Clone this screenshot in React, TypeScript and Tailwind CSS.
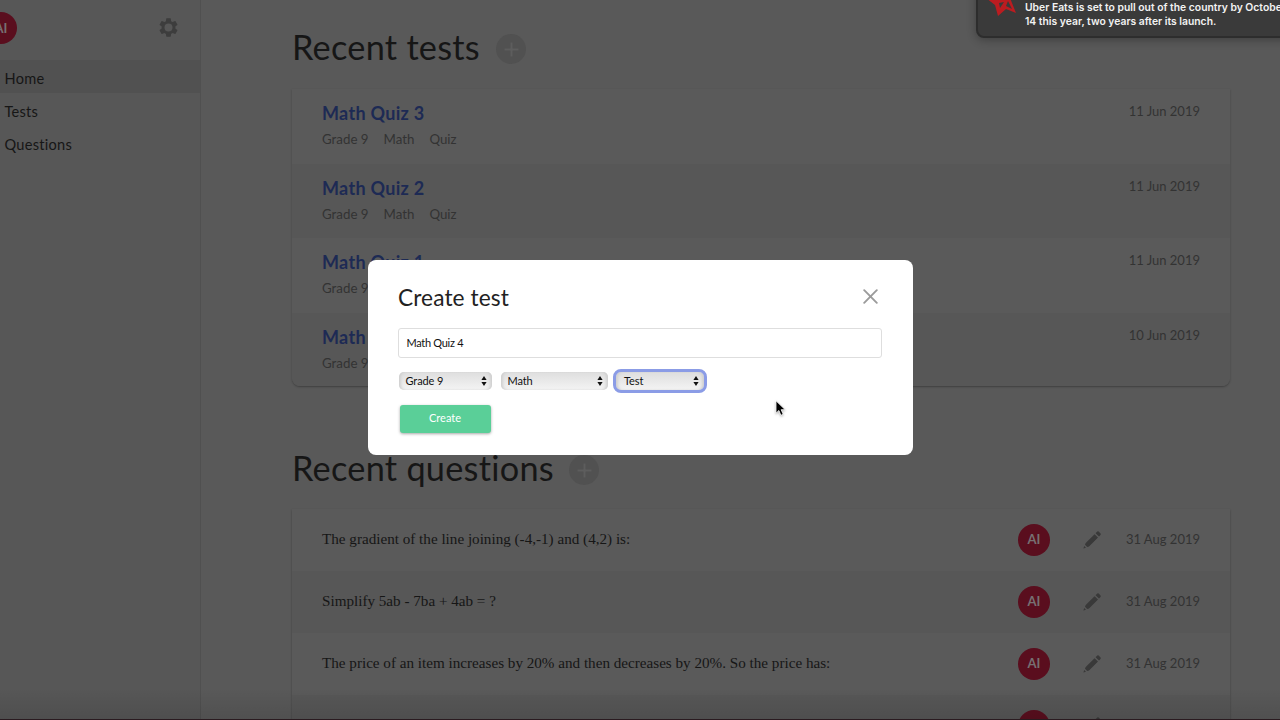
import type { ReactNode } from 'react';

const navItems = [
  { label: 'Home', active: true },
  { label: 'Tests', active: false },
  { label: 'Questions', active: false },
];

const tests = [
  { title: 'Math Quiz 3', date: '11 Jun 2019' },
  { title: 'Math Quiz 2', date: '11 Jun 2019' },
  { title: 'Math Quiz 1', date: '11 Jun 2019' },
  { title: 'Math Quiz', date: '10 Jun 2019' },
];

const questions = [
  'The gradient of the line joining (-4,-1) and (4,2) is:',
  'Simplify 5ab - 7ba + 4ab = ?',
  'The price of an item increases by 20% and then decreases by 20%. So the price has:',
  '',
];

export default function App() {
  return (
    <div className="relative flex h-[720px] w-[1280px] overflow-hidden bg-[#595959] font-['Lato',sans-serif] text-[#161616]">
      {/* Sidebar */}
      <aside className="h-full w-[201px] shrink-0 border-r border-[#505050] bg-[#575757]">
        <div className="flex h-[60px] items-start justify-between pr-[20px] pt-[12px]">
          <div className="-ml-[15px]">
            <Avatar />
          </div>
          <GearIcon />
        </div>
        <nav>
          {navItems.map((item) => (
            <div
              key={item.label}
              className={`flex h-[33.2px] items-center pl-[4.5px] pt-[4px] text-[14.6px] tracking-[0.25px] ${
                item.active ? 'bg-[#515151]' : ''
              }`}
            >
              {item.label}
            </div>
          ))}
        </nav>
      </aside>

      {/* Content */}
      <main className="ml-[91px] w-[938px] shrink-0">
        <SectionTitle className="h-[89px] pt-[27px]" width="w-[188px]">
          Recent tests
        </SectionTitle>
        <div className="h-[297px] overflow-hidden rounded-b-lg shadow-[0_1px_2px_rgba(0,0,0,0.3)]">
          {tests.map((t, i) => (
            <div
              key={t.title}
              className={`flex h-[74.7px] justify-between px-[30px] pt-[11px] ${
                i % 2 ? 'bg-[#575757]' : 'bg-[#5a5a5a]'
              }`}
            >
              <div>
                <div className="text-[18px] font-bold leading-[26px] tracking-[0.3px] text-[#1d2a54]">
                  {t.title}
                </div>
                <div className="mt-[3px] flex gap-[15px] text-[13.3px] leading-5 text-[#333333]">
                  <span>Grade 9</span>
                  <span>Math</span>
                  <span>Quiz</span>
                </div>
              </div>
              <div className="pt-px text-[13px] leading-[21px] text-[#333333]">{t.date}</div>
            </div>
          ))}
        </div>

        <SectionTitle className="h-[123px] pt-[62px]" width="w-[261px]">
          Recent questions
        </SectionTitle>
        <div className="overflow-hidden shadow-[0_1px_2px_rgba(0,0,0,0.3)]">
          {questions.map((q, i) => (
            <div
              key={i}
              className={`flex h-[62px] items-center px-[30px] pb-px ${
                i % 2 ? 'bg-[#575757]' : 'bg-[#5a5a5a]'
              }`}
            >
              <div className="flex-1 pb-px font-['Liberation_Serif',serif] text-[15.15px]">{q}</div>
              <Avatar />
              <PencilIcon />
              <div className="ml-[24px] w-[75px] whitespace-nowrap text-right text-[13px] text-[#333333]">
                31 Aug 2019
              </div>
            </div>
          ))}
        </div>
      </main>

      {/* Shade along the bottom of the window */}
      <div className="absolute inset-x-0 bottom-0 h-8 border-b border-[#2a1b20] bg-linear-to-b from-transparent to-black/10" />

      <Notification />

      {/* Modal */}
      <div className="absolute inset-0 flex items-start justify-center pt-[260px]">
        <CreateTestModal />
      </div>

      <CursorIcon />
    </div>
  );
}

function SectionTitle(props: { children: ReactNode; className: string; width: string }) {
  return (
    <div className={`flex gap-[16px] ${props.className}`}>
      <h1 className={`whitespace-nowrap text-[34.3px] leading-[39px] tracking-[0.25px] ${props.width}`}>
        {props.children}
      </h1>
      <div className="mt-[7px] flex size-[30px] items-center justify-center rounded-full bg-[#515151]">
        <svg width="15" height="15" viewBox="0 0 15 15" stroke="#5d5d5d" strokeWidth="2">
          <path d="M7.5 0.5v14M0.5 7.5h14" />
        </svg>
      </div>
    </div>
  );
}

function Avatar() {
  return (
    <div className="flex size-8 shrink-0 items-center justify-center rounded-full bg-[#5a0e1e] pt-px text-[13px] font-bold text-[#777072]">
      AI
    </div>
  );
}

function GearIcon() {
  return (
    <svg className="mt-[4px]" width="23" height="23" viewBox="0 0 24 24" fill="#3d3d3d">
      <path d="M19.14 12.94c.04-.3.06-.61.06-.94 0-.32-.02-.64-.07-.94l2.03-1.58c.18-.14.23-.41.12-.61l-1.92-3.32c-.12-.22-.37-.29-.59-.22l-2.39.96c-.5-.38-1.03-.7-1.62-.94l-.36-2.54c-.04-.24-.24-.41-.48-.41h-3.84c-.24 0-.43.17-.47.41l-.36 2.54c-.59.24-1.13.57-1.62.94l-2.39-.96c-.22-.08-.47 0-.59.22L2.74 8.87c-.12.21-.08.47.12.61l2.03 1.58c-.05.3-.09.63-.09.94s.02.64.07.94l-2.03 1.58c-.18.14-.23.41-.12.61l1.92 3.32c.12.22.37.29.59.22l2.39-.96c.5.38 1.03.7 1.62.94l.36 2.54c.05.24.24.41.48.41h3.84c.24 0 .44-.17.47-.41l.36-2.54c.59-.24 1.13-.56 1.62-.94l2.39.96c.22.08.47 0 .59-.22l1.92-3.32c.12-.22.07-.47-.12-.61l-2.01-1.58zM12 16.2A4.2 4.2 0 1 1 12 7.8a4.2 4.2 0 0 1 0 8.4z" />
    </svg>
  );
}

function PencilIcon() {
  return (
    <svg className="ml-[33px] shrink-0" width="18" height="18" viewBox="0 0 18 18" fill="#393939">
      <path d="M.4 17.6 1.2 15l1.8 1.8zM2 13.8Q2.300 12.400 3.200 11.500L11.600 3.200 15 6.600 6.500 15Q5.600 15.800 4.200 16.100zM12.6 2.2 14.3.6q.7-.6 1.4 0l1.8 1.9q.6.7 0 1.4l-1.5 1.7z" />
    </svg>
  );
}

function Notification() {
  return (
    <div className="absolute -top-8 left-[976px] flex h-[70px] w-[340px] overflow-hidden rounded-lg border-2 border-[#2d2d2d] bg-[#3a3a3a] shadow-[0_2px_10px_rgba(0,0,0,0.3)]">
      {/* Star logo, only its lower points are on screen */}
      <svg className="ml-[8px] mt-[28px] shrink-0" width="32" height="20" viewBox="0 0 32 20">
        <path d="M0 0h24l6 15-10-4-8 7-3-11z" fill="#bb1c20" />
        <path d="m13 5 5-1-4 6zM22 3l4 8-6-3z" fill="#3a3a3a" />
      </svg>
      <p className="ml-[7px] mt-[31px] whitespace-nowrap font-['Inter',sans-serif] text-[10.35px] font-semibold leading-[13.5px] text-[#f2f2f2]">
        Uber Eats is set to pull out of the country by October
        <br />
        14 this year, two years after its launch.
      </p>
    </div>
  );
}

function CreateTestModal() {
  return (
    <div className="h-[195px] w-[545px] rounded-lg bg-white px-[30.5px] pt-[22px]">
      <div className="flex h-[46px] items-start justify-between">
        <h2 className="pt-px text-[22.7px] leading-[30px] tracking-[0.1px] text-[#222222]">Create test</h2>
        <svg className="mr-[4px] mt-[7px]" width="15" height="15" viewBox="0 0 15 15" stroke="#9b9b9b" strokeWidth="1.9" strokeLinecap="round">
          <path d="m1.2 1.2 12.6 12.6M13.8 1.2 1.2 13.8" />
        </svg>
      </div>
      <div className="flex h-[30px] items-center rounded-[3px] border border-[#dedede] px-[7.5px] text-[11px] tracking-[-0.3px] text-[#111111]">
        Math Quiz 4
      </div>
      <div className="mt-[14px] flex h-[18px]">
        <SelectBox value="Grade 9" className="ml-[0.5px] w-[93px] pl-[7px]" />
        <SelectBox value="Math" className="ml-[9px] w-[107px] pl-[7px]" />
        <SelectBox
          value="Test"
          className="ml-[8.5px] w-[88px] pl-[8px] outline-[3px] outline-[#8b9ce6]"
        />
      </div>
      <div className="ml-[1.5px] mt-[15px] flex h-[28px] w-[91px] items-center justify-center rounded-[3px] bg-[#5acf98] pb-px text-[11px] text-white shadow-[0_1px_3px_rgba(0,0,0,0.35)]">
        Create
      </div>
    </div>
  );
}

function SelectBox(props: { value: string; className: string }) {
  return (
    <div
      className={`flex items-center justify-between rounded-[5px] bg-linear-to-b from-[#dedede] to-[#f4f4f4] pr-[5px] text-[11px] tracking-[-0.1px] text-[#111111] shadow-[inset_3px_0_3px_-1px_#cfcfcf,inset_-3px_0_3px_-1px_#cfcfcf] ${props.className}`}
    >
      {props.value}
      <svg width="6" height="10" viewBox="0 0 6 10" fill="#111111">
        <path d="M3 0 5.6 4H.4zM3 10 .4 6h5.2z" />
      </svg>
    </div>
  );
}

function CursorIcon() {
  return (
    <svg className="absolute left-[775px] top-[400px] drop-shadow-[0_1px_1px_rgba(0,0,0,0.3)]" width="11" height="17" viewBox="0 0 11 17">
      <path d="M1 .8v12.4l2.9-2.7 2 4.8 2.3-1-2-4.6h4z" fill="#000" stroke="#fff" strokeWidth=".8" />
    </svg>
  );
}
